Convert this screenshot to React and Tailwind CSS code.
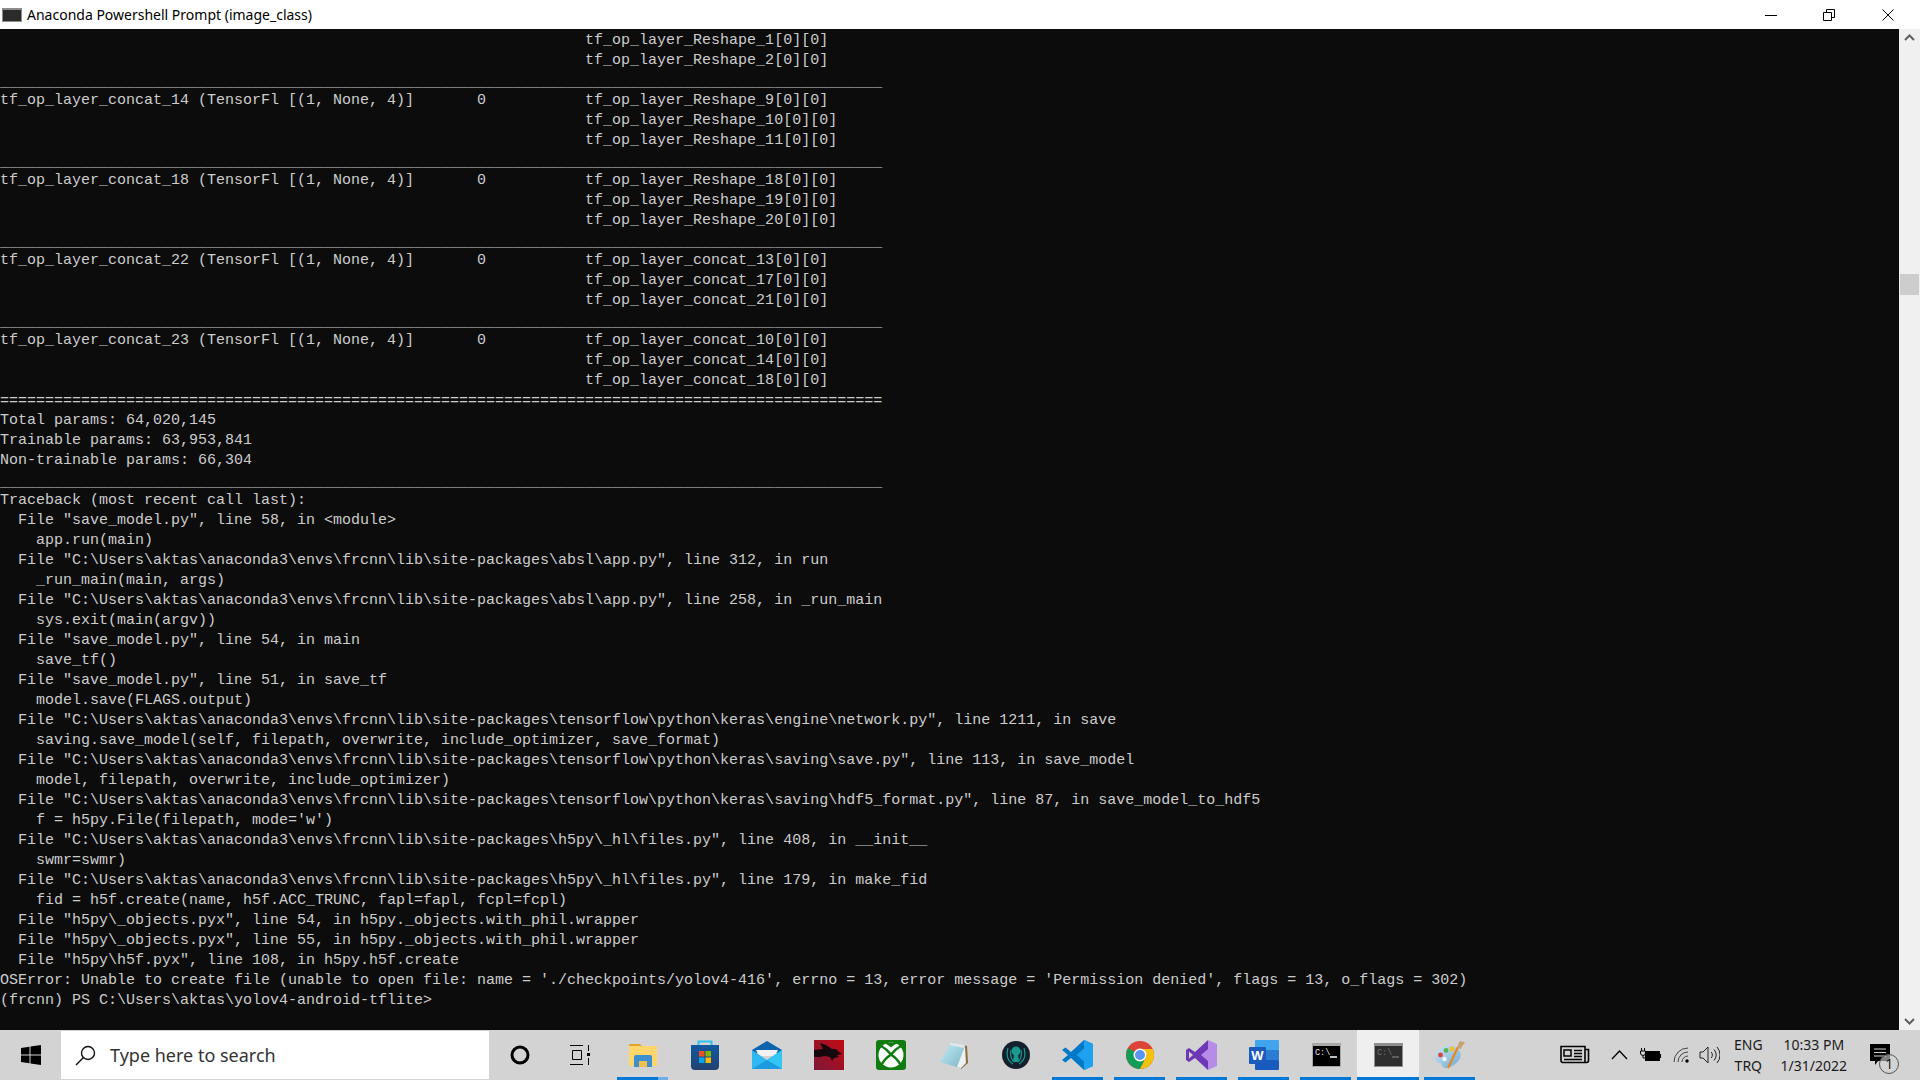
const pad = " ".repeat(65);
const layer = (name, input) =>
  `${name} (TensorFl [(1, None, 4)]`.padEnd(53) + "0".padEnd(12) + input;
const rule = "_".repeat(98);
const doubleRule = "=".repeat(98);

const lines = [
  pad + "tf_op_layer_Reshape_1[0][0]",
  pad + "tf_op_layer_Reshape_2[0][0]",
  rule,
  layer("tf_op_layer_concat_14", "tf_op_layer_Reshape_9[0][0]"),
  pad + "tf_op_layer_Reshape_10[0][0]",
  pad + "tf_op_layer_Reshape_11[0][0]",
  rule,
  layer("tf_op_layer_concat_18", "tf_op_layer_Reshape_18[0][0]"),
  pad + "tf_op_layer_Reshape_19[0][0]",
  pad + "tf_op_layer_Reshape_20[0][0]",
  rule,
  layer("tf_op_layer_concat_22", "tf_op_layer_concat_13[0][0]"),
  pad + "tf_op_layer_concat_17[0][0]",
  pad + "tf_op_layer_concat_21[0][0]",
  rule,
  layer("tf_op_layer_concat_23", "tf_op_layer_concat_10[0][0]"),
  pad + "tf_op_layer_concat_14[0][0]",
  pad + "tf_op_layer_concat_18[0][0]",
  doubleRule,
  "Total params: 64,020,145",
  "Trainable params: 63,953,841",
  "Non-trainable params: 66,304",
  rule,
  "Traceback (most recent call last):",
  '  File "save_model.py", line 58, in <module>',
  "    app.run(main)",
  '  File "C:\\Users\\aktas\\anaconda3\\envs\\frcnn\\lib\\site-packages\\absl\\app.py", line 312, in run',
  "    _run_main(main, args)",
  '  File "C:\\Users\\aktas\\anaconda3\\envs\\frcnn\\lib\\site-packages\\absl\\app.py", line 258, in _run_main',
  "    sys.exit(main(argv))",
  '  File "save_model.py", line 54, in main',
  "    save_tf()",
  '  File "save_model.py", line 51, in save_tf',
  "    model.save(FLAGS.output)",
  '  File "C:\\Users\\aktas\\anaconda3\\envs\\frcnn\\lib\\site-packages\\tensorflow\\python\\keras\\engine\\network.py", line 1211, in save',
  "    saving.save_model(self, filepath, overwrite, include_optimizer, save_format)",
  '  File "C:\\Users\\aktas\\anaconda3\\envs\\frcnn\\lib\\site-packages\\tensorflow\\python\\keras\\saving\\save.py", line 113, in save_model',
  "    model, filepath, overwrite, include_optimizer)",
  '  File "C:\\Users\\aktas\\anaconda3\\envs\\frcnn\\lib\\site-packages\\tensorflow\\python\\keras\\saving\\hdf5_format.py", line 87, in save_model_to_hdf5',
  "    f = h5py.File(filepath, mode='w')",
  '  File "C:\\Users\\aktas\\anaconda3\\envs\\frcnn\\lib\\site-packages\\h5py\\_hl\\files.py", line 408, in __init__',
  "    swmr=swmr)",
  '  File "C:\\Users\\aktas\\anaconda3\\envs\\frcnn\\lib\\site-packages\\h5py\\_hl\\files.py", line 179, in make_fid',
  "    fid = h5f.create(name, h5f.ACC_TRUNC, fapl=fapl, fcpl=fcpl)",
  '  File "h5py\\_objects.pyx", line 54, in h5py._objects.with_phil.wrapper',
  '  File "h5py\\_objects.pyx", line 55, in h5py._objects.with_phil.wrapper',
  '  File "h5py\\h5f.pyx", line 108, in h5py.h5f.create',
  "OSError: Unable to create file (unable to open file: name = './checkpoints/yolov4-416', errno = 13, error message = 'Permission denied', flags = 13, o_flags = 302)",
  "(frcnn) PS C:\\Users\\aktas\\yolov4-android-tflite>",
];

function CmdIcon({ dim }) {
  return (
    <svg width="29" height="24" viewBox="0 0 29 24">
      <rect width="29" height="24" fill={dim ? "#8f8f8f" : "#a8a8a8"} />
      <rect x="1" y="3" width="27" height="20" fill={dim ? "#2e2e2e" : "#000"} />
      <text
        x="3"
        y="12"
        fontSize="8.5"
        fill={dim ? "#6e6e6e" : "#e6e6e6"}
        fontFamily="'Liberation Mono', monospace"
      >
        C:\
      </text>
      <path d="M18 14h7" stroke={dim ? "#6e6e6e" : "#fff"} strokeWidth="1.5" />
    </svg>
  );
}

const apps = [
  {
    line: "double",
    icon: (
      <svg width="28" height="25" viewBox="0 0 28 25">
        <path d="M0 2a1 1 0 0 1 1-1h10l2 2v4H0z" fill="#e0a42a" />
        <path d="M0 3h28v20H0z" fill="#ffd66b" />
        <path d="M5 24V14a2 2 0 0 1 2-2h14a2 2 0 0 1 2 2v10h-5v-6h-8v6z" fill="#3d8fd1" />
        <path d="M10 18h8v6h-8z" fill="#f1c04a" />
      </svg>
    ),
  },
  {
    line: false,
    icon: (
      <svg width="30" height="30" viewBox="0 0 30 30">
        <defs>
          <linearGradient id="storeBag" x1="0" y1="0" x2="0" y2="1">
            <stop offset="0" stopColor="#0f5a9f" />
            <stop offset="1" stopColor="#23416f" />
          </linearGradient>
        </defs>
        <path d="M8.500 7V1.500h13V7" fill="none" stroke="#2cc3f2" strokeWidth="2" />
        <path d="M1 5h28v21a4 4 0 0 1-4 4H5a4 4 0 0 1-4-4z" fill="url(#storeBag)" />
        <rect x="9" y="11" width="5.500" height="5.500" fill="#f25022" />
        <rect x="15.500" y="11" width="5.500" height="5.500" fill="#7fba00" />
        <rect x="9" y="17.500" width="5.500" height="5.500" fill="#00a4ef" />
        <rect x="15.500" y="17.500" width="5.500" height="5.500" fill="#ffb900" />
      </svg>
    ),
  },
  {
    line: false,
    icon: (
      <svg width="30" height="28" viewBox="0 0 30 28">
        <path d="M0 9 15 0l15 9v3H0z" fill="#0c64ad" />
        <path d="M4 9h22l-3 6H7z" fill="#f2f2f2" />
        <path d="M0 9l15 10L30 9v19H0z" fill="#2fb8f2" />
        <path d="M15 19 30 9v19z" fill="#34c5f5" />
        <path d="M0 28l15-9 15 9z" fill="#1b9be0" />
      </svg>
    ),
  },
  {
    line: false,
    icon: (
      <svg width="30" height="30" viewBox="0 0 30 30">
        <defs>
          <linearGradient id="dragonBg" x1="0" y1="1" x2="1" y2="0">
            <stop offset="0" stopColor="#7c1838" />
            <stop offset="1" stopColor="#c30a14" />
          </linearGradient>
        </defs>
        <rect width="30" height="30" fill="url(#dragonBg)" />
        <path
          d="M0 10 9 9 6 3l6 2 6 4 4 0 3 3 3 2-5 1 2 2-5 1-2 3-2-4-5-1-6 1-5 0z"
          fill="#14080c"
        />
      </svg>
    ),
  },
  {
    line: false,
    icon: (
      <svg width="30" height="30" viewBox="0 0 30 30">
        <rect width="30" height="30" rx="3" fill="#107c10" />
        <circle cx="15" cy="15" r="12.500" fill="#fff" />
        <path d="M5 6C9 8 13 12 15 14.500 17 12 21 8 25 6" stroke="#107c10" strokeWidth="2.400" fill="none" />
        <path d="M5.500 24.500C8 20 12 16.500 15 14.500c3 2 7 5.500 9.500 10" stroke="#107c10" strokeWidth="2.400" fill="none" />
        <path d="M9 3.500C12 5 13.500 6 15 7.500c1.500-1.500 3-2.500 6-4C17 2 13 2 9 3.500z" fill="#107c10" />
      </svg>
    ),
  },
  {
    line: false,
    icon: (
      <svg width="28" height="27" viewBox="0 0 28 27">
        <defs>
          <linearGradient id="padBlue" x1="0" y1="0" x2="1" y2="1">
            <stop offset="0" stopColor="#c9ecf5" />
            <stop offset="1" stopColor="#79b6c8" />
          </linearGradient>
        </defs>
        <path d="M12 0 27 4l1 17-7 6z" fill="#8a6b3a" />
        <path d="M11 0 25 3l-5 23L0 20z" fill="url(#padBlue)" />
        <path d="M25 4l1 17-5 5-4-1z" fill="#eef1f3" />
        <path d="M11 0 25 3l-1 3L9 3z" fill="#dfe5e8" />
      </svg>
    ),
  },
  {
    line: false,
    icon: (
      <svg width="28" height="28" viewBox="0 0 28 28">
        <circle cx="14" cy="14" r="14" fill="#14202c" />
        <circle cx="14" cy="10" r="4.500" fill="#179a8f" />
        <path d="M12 13h4l1 8h-6z" fill="#179a8f" />
        <path d="M6 7c-2 7 0 13 5 16M22 7c2 7 0 13-5 16M9 9c-1 5 0 9 3 12M19 9c1 5 0 9-3 12" stroke="#179a8f" strokeWidth="1.200" fill="none" />
      </svg>
    ),
  },
  {
    line: true,
    icon: (
      <svg width="31" height="30" viewBox="0 0 31 30">
        <path d="M22 0 31 4v22l-9 4L9 18l-5.500 4.500L0 20l6-5-6-5 3.500-2.500L9 12z" fill="#0078c8" />
        <path d="M22 0 31 4v22l-9 4zM22 8.500 14.500 15l7.500 6.500z" fill="#1ea1f1" fillRule="evenodd" />
      </svg>
    ),
  },
  {
    line: true,
    icon: (
      <svg width="28" height="28" viewBox="0 0 28 28">
        <circle cx="14" cy="14" r="14" fill="#db4437" />
        <path d="M14 14 2 7A14 14 0 0 0 14 28l7-12z" fill="#0f9d58" />
        <path d="M14 8h12.700A14 14 0 0 1 14 28l7-14z" fill="#f4c20d" />
        <circle cx="14" cy="14" r="6.500" fill="#fff" />
        <circle cx="14" cy="14" r="5" fill="#5a95f5" />
      </svg>
    ),
  },
  {
    line: true,
    icon: (
      <svg width="31" height="30" viewBox="0 0 31 30">
        <path d="M22 0 9 12 3 8 0 10v10l3 2 6-4 13 12z" fill="#6e37b5" />
        <path d="M3 11.500v7l4-3.500z" fill="#d3d3d3" />
        <path d="M22 0 31 4v22l-9 4zM22 9l-7 6 7 6z" fill="#b68ce9" fillRule="evenodd" />
      </svg>
    ),
  },
  {
    line: true,
    icon: (
      <svg width="30" height="30" viewBox="0 0 30 30">
        <rect x="6" y="0" width="24" height="10" rx="1" fill="#41a5ee" />
        <rect x="6" y="10" width="24" height="10" fill="#2b7cd3" />
        <rect x="6" y="20" width="24" height="10" rx="1" fill="#185abd" />
        <rect x="0" y="7" width="17" height="17" rx="1" fill="#1a5bbd" />
        <text x="8.500" y="20" textAnchor="middle" fontSize="13" fontWeight="700" fill="#fff" fontFamily="'Liberation Sans', sans-serif">
          W
        </text>
      </svg>
    ),
  },
  { line: true, icon: <CmdIcon /> },
  { line: true, active: true, icon: <CmdIcon dim /> },
  {
    line: true,
    icon: (
      <svg width="30" height="28" viewBox="0 0 30 28">
        <defs>
          <linearGradient id="palette" x1="0" y1="0" x2="1" y2="1">
            <stop offset="0" stopColor="#d2e6f3" />
            <stop offset="1" stopColor="#6aaad4" />
          </linearGradient>
        </defs>
        <path d="M0 16C0 9 9 4 17 5c7 1 10 7 8 12-3 6-9 10-15 10-3 0-3-4-5-5-2-.5-5-1-5-6z" fill="url(#palette)" />
        <circle cx="5.500" cy="14" r="2.400" fill="#e0443a" />
        <circle cx="11" cy="9.500" r="2.400" fill="#59b54a" />
        <circle cx="17" cy="8" r="2.400" fill="#f2c02c" />
        <circle cx="9.500" cy="18" r="2.200" fill="#f0f6fa" />
        <path d="M13 27 23 6" stroke="#e8861f" strokeWidth="2.200" />
        <path d="M22 7 24 1c2-1 5 0 6 1l-3 3-1 3z" fill="#c9a26f" />
      </svg>
    ),
  },
];

export default function App() {
  return (
    <div className="w-[1920px] h-[1080px] flex flex-col overflow-hidden bg-[#0c0c0c]">
      {/* title bar */}
      <div className="h-[29px] bg-white flex items-center shrink-0">
        <svg className="ml-[2px]" width="20" height="14" viewBox="0 0 20 14">
          <rect width="20" height="14" fill="#8c8c8c" />
          <rect x="1" y="2" width="18" height="11" fill="#2b2b2b" />
        </svg>
        <span className="ml-[5px] text-[14px] text-black font-['Noto_Sans','Open_Sans',sans-serif]">
          Anaconda Powershell Prompt (image_class)
        </span>
        <div className="ml-auto flex items-center h-full">
          <svg width="12" height="12" viewBox="0 0 12 12" className="mr-[46px]">
            <path d="M0 6.500h12" stroke="#000" />
          </svg>
          <svg width="12" height="12" viewBox="0 0 12 12" className="mr-[47px]">
            <path d="M.5 3.500h8v8h-8zM3.500 3.500v-3h8v8h-3" stroke="#000" fill="none" />
          </svg>
          <svg width="12" height="12" viewBox="0 0 12 12" className="mr-[26px]">
            <path d="M.5.5l11 11M11.500.5l-11 11" stroke="#000" />
          </svg>
        </div>
      </div>

      {/* terminal + scrollbar */}
      <div className="flex-1 flex min-h-0">
        <div className="flex-1 pt-[2px] text-[15px] leading-[20px] text-[#cccccc] bg-[#0c0c0c] overflow-hidden whitespace-pre font-['Liberation_Mono',monospace]">
          {lines.map((line, i) => (
            <div
              key={i}
              className={`h-[20px] ${line === rule ? "translate-y-[2px]" : ""} ${line === doubleRule ? "translate-y-[1px]" : ""}`}
            >
              {line}
            </div>
          ))}
        </div>
        <div className="w-[21px] bg-[#f0f0f0] flex flex-col items-center">
          <svg className="mt-[5px]" width="11" height="7" viewBox="0 0 11 7">
            <path d="M1 6l4.500-4.500L10 6" stroke="#606060" strokeWidth="2" fill="none" />
          </svg>
          <div className="mt-[233px] w-[19px] h-[21px] bg-[#cdcdcd]" />
          <svg className="mt-auto mb-[5px]" width="11" height="7" viewBox="0 0 11 7">
            <path d="M1 1l4.500 4.500L10 1" stroke="#606060" strokeWidth="2" fill="none" />
          </svg>
        </div>
      </div>

      {/* taskbar */}
      <div className="h-[50px] shrink-0 bg-[#d3d3d3] flex items-stretch text-[#1a1a1a] font-['Noto_Sans','Open_Sans',sans-serif]">
        <div className="w-[61px] flex items-center justify-center">
          <svg width="20" height="20" viewBox="0 0 20 20">
            <path d="M0 3l8.500-1.200V9.500H0zM9.500 1.600 20 0v9.500H9.500zM0 10.500h8.500v7.700L0 17zM9.500 10.500H20V20L9.500 18.400z" fill="#000" />
          </svg>
        </div>
        <div className="w-[428px] my-px bg-white flex items-center">
          <svg className="ml-[14px]" width="21" height="21" viewBox="0 0 21 21">
            <circle cx="13" cy="8" r="6.500" stroke="#111" strokeWidth="1.400" fill="none" />
            <path d="M8.500 12.500 1 20" stroke="#111" strokeWidth="1.500" />
          </svg>
          <span className="ml-[14px] text-[18px] text-[#333]">Type here to search</span>
        </div>
        <div className="w-[62px] flex items-center justify-center">
          <svg width="20" height="20" viewBox="0 0 20 20">
            <circle cx="10" cy="10" r="8" stroke="#000" strokeWidth="3" fill="none" />
          </svg>
        </div>
        <div className="w-[61px] pr-[3px] flex items-center justify-center">
          <svg width="20" height="20" viewBox="0 0 20 20">
            <path d="M0 .5h13M0 19.500h13M2.500 5.500h9v9h-9zM18.500 0v6M18.500 13v7" stroke="#000" fill="none" />
            <rect x="17" y="8" width="3" height="3" fill="#000" />
          </svg>
        </div>

        {apps.map((app, i) => (
          <div
            key={i}
            className={`relative w-[62.1px] flex items-center justify-center ${app.active ? "bg-[#efefef]" : ""}`}
          >
            {app.icon}
            {app.line === "double" && (
              <div className="absolute bottom-0 left-[5px] w-[51px] h-[3px] bg-[#0078d7] flex justify-end">
                <div className="w-[10px] h-full bg-[#6eaee3]" />
              </div>
            )}
            {app.line === true && !app.active && (
              <div className="absolute bottom-0 left-[5px] w-[51px] h-[3px] bg-[#0078d7]" />
            )}
            {app.active && <div className="absolute bottom-0 inset-x-0 h-[3px] bg-[#0078d7]" />}
          </div>
        ))}

        {/* system tray */}
        <div className="ml-[79px] flex items-center">
          <svg width="30" height="20" viewBox="0 0 30 20">
            <path d="M1 1.500h24v16H3a2 2 0 0 1-2-2zM25 4.500h3.500v11a2 2 0 0 1-2 2H25" stroke="#000" strokeWidth="1.600" fill="none" />
            <path d="M4 5h7v6H4zM14 5.500h8M14 8.500h8M14 11.500h8M4 14.500h18" stroke="#000" strokeWidth="1.500" fill="none" />
          </svg>
          <svg className="ml-[21px]" width="17" height="10" viewBox="0 0 17 10">
            <path d="M1 9l7.500-8L16 9" stroke="#000" strokeWidth="1.300" fill="none" />
          </svg>
          <svg className="ml-[12px]" width="21" height="14" viewBox="0 0 21 14">
            <path d="M1.500 0v3M4.500 0v3M0.500 3h5v2a2.500 2.500 0 0 1-5 0zM3 7.500v2.500h3" stroke="#000" fill="none" />
            <rect x="5" y="3" width="15" height="10" fill="#000" />
            <rect x="20" y="6" width="1" height="4" fill="#000" />
          </svg>
          <svg className="ml-[12px]" width="17" height="16" viewBox="0 0 17 16">
            <path d="M1 15A14 14 0 0 1 15 1M5 15A10 10 0 0 1 15 5M9 15A6 6 0 0 1 15 9" stroke="#444" fill="none" />
            <circle cx="14" cy="14" r="1.700" fill="#000" />
          </svg>
          <svg className="ml-[9px]" width="21" height="18" viewBox="0 0 21 18">
            <path d="M1 6h3l5-5v16l-5-5H1zM12 6a4 4 0 0 1 0 6M15 3.500a8 8 0 0 1 0 11M18 1a12 12 0 0 1 0 16" stroke="#222" fill="none" />
          </svg>
          <div className="ml-[14px] w-[28px] flex flex-col items-center gap-[1px] text-[14px] leading-[20px]">
            <span>ENG</span>
            <span>TRQ</span>
          </div>
          <div className="ml-[18px] w-[67px] flex flex-col items-center gap-[1px] text-[14px] leading-[20px] whitespace-nowrap">
            <span>10:33 PM</span>
            <span>1/31/2022</span>
          </div>
          <div className="relative ml-[23px] w-[20px] h-[18px] -mt-[4px]">
            <svg width="20" height="22" viewBox="0 0 20 22">
              <path d="M0 0h20v17H8l-3 4v-4H0z" fill="#000" />
              <path d="M4 5h12M4 8.500h12M4 12h12" stroke="#d3d3d3" />
            </svg>
            <div className="absolute left-[9px] top-[10px] w-[20px] h-[20px] rounded-full border border-[#555] bg-[#d3d3d3]/60 flex items-center justify-center text-[14px] leading-none">
              1
            </div>
          </div>
        </div>
      </div>
    </div>
  );
}
